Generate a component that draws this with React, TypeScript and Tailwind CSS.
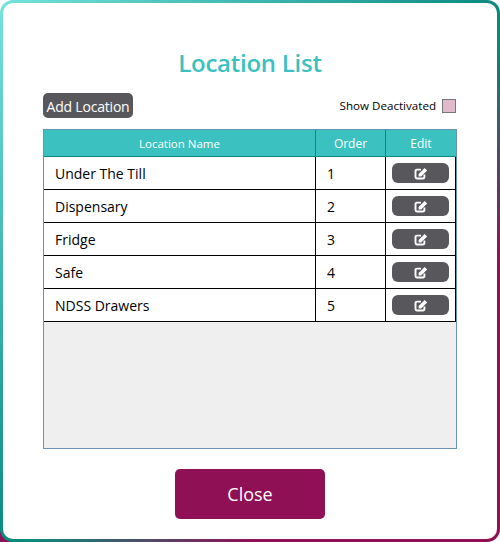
import React from 'react';

const locations = [
  { name: 'Under The Till', order: 1 },
  { name: 'Dispensary', order: 2 },
  { name: 'Fridge', order: 3 },
  { name: 'Safe', order: 4 },
  { name: 'NDSS Drawers', order: 5 },
];

// pencil-in-box icon, heavier than the ones in the icon packages
const EditIcon = () => (
  <svg viewBox="0 0 14 13" className="w-[14px] h-[13px]">
    <path
      d="M7 2.6H2.9A1.4 1.4 0 0 0 1.5 4v6.1a1.4 1.4 0 0 0 1.4 1.4H9a1.4 1.4 0 0 0 1.4-1.4V7.6"
      fill="none"
      stroke="currentColor"
      strokeWidth="1.9"
    />
    <path d="M4.6 6.9 10.6.9l2.5 2.5-6 6H4.6Z" fill="currentColor" />
  </svg>
);

const App: React.FC = () => {
  return (
    <div className="h-[542px] w-[500px] bg-[radial-gradient(circle_at_bottom_left,#8f1054_13px,#ffffff_13px)] font-['Open_Sans',sans-serif] overflow-hidden">
      <div className="h-[542px] bg-[linear-gradient(to_bottom_right,#74e3dc_0%,#0b8a80_50%,#0b8a80_53%,#8f1054_75%,#8f1054_100%)] p-[3px] rounded-[13px]">
        <div className="h-[536px] bg-white rounded-[10px] px-[40px] flex flex-col">
          {/* Title */}
          <h1 className="mt-[41px] h-[38px] leading-[38px] text-center text-[24px] font-semibold text-[#3bc1c0] tracking-[-0.25px]">
            Location List
          </h1>

          {/* Toolbar */}
          <div className="mt-[11px] flex justify-between items-center h-[25px]">
            <button className="h-[25px] w-[90px] bg-[#58575c] text-white text-[14px] leading-[27px] rounded-[5px] tracking-[-0.2px] whitespace-nowrap">
              Add Location
            </button>
            <div className="flex items-center gap-[6px] pt-[1px] pr-[1px]">
              <span className="text-[11.6px] text-black">Show Deactivated</span>
              <span className="w-[14px] h-[14px] bg-[#e0bacb] border border-[#77767b]" />
            </div>
          </div>

          {/* Table */}
          <div className="mt-[11px] h-[320px] w-[414px] border border-[#6a93b8] bg-[#efefef]">
            <div className="grid grid-cols-[272px_70px_70px] h-[27px] bg-[#3bc1c0] border-b border-[#0b8a80] text-white text-[12px] leading-[28px]">
              <div className="text-center text-[11.5px] border-r border-[#0b8a80]">Location Name</div>
              <div className="text-center border-r border-[#0b8a80]">Order</div>
              <div className="text-center">Edit</div>
            </div>
            {locations.map((loc) => (
              <div
                key={loc.order}
                className="grid grid-cols-[272px_70px_70px] h-[33px] bg-white border-b border-black text-[14px] text-black border-r"
              >
                <div className="flex items-center pl-[11px] border-r border-black">{loc.name}</div>
                <div className="flex items-center pl-[11px] border-r border-black">{loc.order}</div>
                <div className="flex items-center justify-center pr-[1px]">
                  <button className="w-[57px] h-[20px] rounded-[6px] bg-[#58575c] text-white flex items-center justify-center">
                    <EditIcon />
                  </button>
                </div>
              </div>
            ))}
          </div>

          {/* Close */}
          <div className="mt-[20px] flex justify-center">
            <button className="w-[150px] h-[50px] rounded-[5px] bg-[#8f1054] text-white text-[18px]">
              Close
            </button>
          </div>
        </div>
      </div>
    </div>
  );
};

export default App;
